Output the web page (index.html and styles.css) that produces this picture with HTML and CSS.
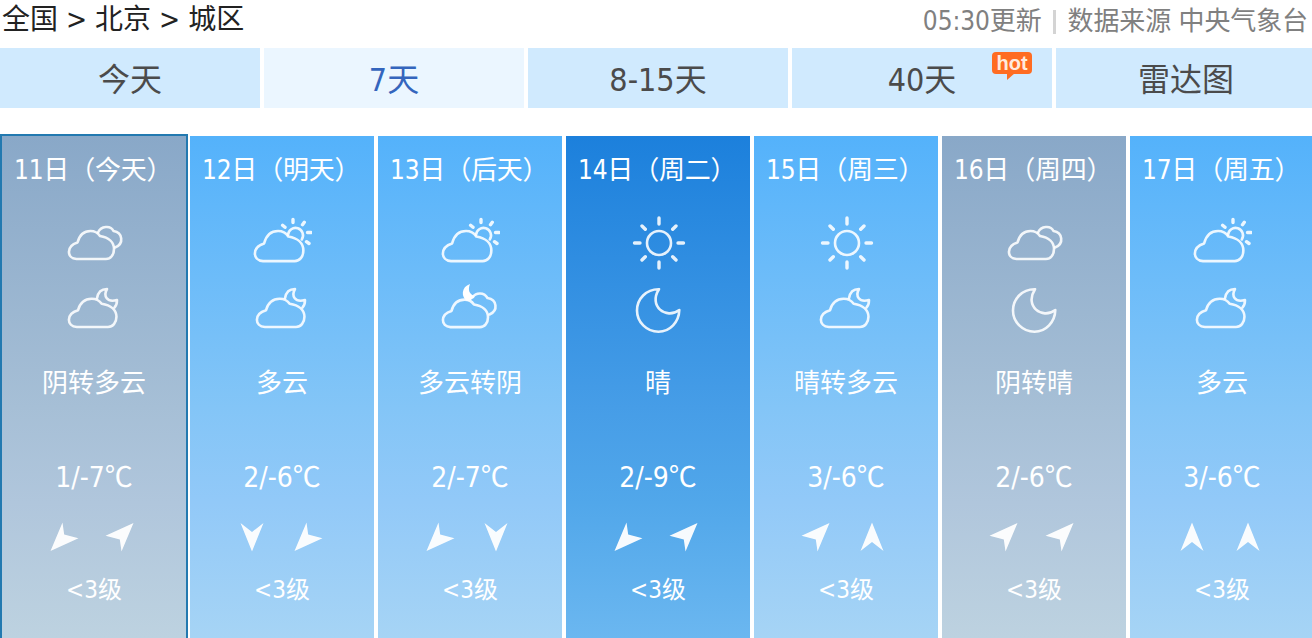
FILE: index.html
```html
<!DOCTYPE html>
<html lang="zh-CN">
<head>
    <meta charset="UTF-8">
    <meta name="viewport" content="width=device-width, initial-scale=1.0">
    <title>北京城区天气预报</title>
    <link rel="stylesheet" href="styles.css">
</head>
<body>
    <svg class="sprite" width="0" height="0">
        <defs>
            <path id="cloud-shape" vector-effect="non-scaling-stroke" d="M12.5 46 C2.5 45.5 2 33 13.5 29.5 C15.5 22 20 18 26.5 18 C30.5 18 34 20 36 23 C45 24.5 50 29.5 50 36 C50 42 46.5 46 42 46 Z"/>
            <symbol id="overcast" viewBox="0 0 60 60">
                <use href="#cloud-shape"/>
                <path d="M34 19.5 C37 13 46.5 12 49.5 18 C58.5 19.5 60.5 30.5 51 34.5"/>
            </symbol>
            <symbol id="cloudy-day" viewBox="0 0 60 60">
                <use href="#cloud-shape" transform="translate(-2.4 -1.3) scale(1.075)"/>
                <path d="M36 22 A7.5 7.5 0 1 1 49.8 26.5"/>
                <path class="ray" d="M41 6.5V9.5M52.3 9.3L50.5 11.7M59 19.5H55.5M57 30.5L54.5 28.7M30.6 12.3L33 14.3"/>
            </symbol>
            <symbol id="cloudy-night" viewBox="0 0 60 60">
                <use href="#cloud-shape" transform="translate(-.3 .5) scale(1.055 1.01)"/>
                <path d="M33 18.3 C34 12 38 9 43 9 C39 16 43 23 53 20 C53 24 52 26 50.5 27.5"/>
            </symbol>
            <symbol id="cloudy-overcast-night" viewBox="0 0 60 60">
                <use href="#cloud-shape" transform="translate(-2 2) scale(1 .98)"/>
                <path d="M33 17 C36 12.5 44 12 47.5 18 C57 19.5 58.5 30.5 49.5 34.5"/>
                <path class="solid" d="M30 4 C21 7 21 17 27 21 C30 21 33.5 19 34.5 15.8 C29.5 14.5 27.5 10 30 4Z"/>
            </symbol>
            <symbol id="sunny" viewBox="0 0 60 60">
                <circle cx="31" cy="30" r="12"/>
                <path class="ray" d="M31 5V11M31 49V55M6.5 30H12M50 30H55.5M14 13L17.3 16.3M48 13L44.7 16.3M14 47L17.3 43.7M48 47L44.7 43.7"/>
            </symbol>
            <symbol id="clear-night" viewBox="0 0 60 60">
                <path d="M31 9.2 C18 9 9 19 9 30.5 C9 42 18.5 51.7 30.5 51.7 C42 51.7 51 42 51.3 30 C38 40 20 26 31 9.2Z"/>
            </symbol>
            <symbol id="wind-n" viewBox="0 0 32 32">
                <path class="solid" d="M16 1.5 L27.5 30 L16 21 L4.5 30Z"/>
            </symbol>
            <symbol id="wind-ne" viewBox="0 0 32 32">
                <path class="solid" d="M29.5 2 L17.5 30.5 L15.8 18.5 L1.5 14.8Z"/>
            </symbol>
        </defs>
    </svg>

    <header class="header">
        <div class="crumbs">全国 &gt; 北京 &gt; 城区</div>
        <div class="source"><span>05:30更新</span><i class="divider"></i><span>数据来源 中央气象台</span></div>
    </header>

    <nav class="tabs">
        <a class="tab">今天</a>
        <a class="tab active">7天</a>
        <a class="tab">8-15天</a>
        <a class="tab">40天<span class="hot">hot</span></a>
        <a class="tab">雷达图</a>
    </nav>

    <ul class="days">
        <li class="day gray today">
            <h2 class="date">11日（今天）</h2>
            <svg class="icon"><use href="#overcast"/></svg>
            <svg class="icon"><use href="#cloudy-night"/></svg>
            <p class="weather">阴转多云</p>
            <p class="temp">1/-7<span class="unit">℃</span></p>
            <div class="wind"><svg class="flip"><use href="#wind-ne"/></svg><svg><use href="#wind-ne"/></svg></div>
            <p class="level">&lt;3级</p>
        </li>
        <li class="day">
            <h2 class="date">12日（明天）</h2>
            <svg class="icon"><use href="#cloudy-day"/></svg>
            <svg class="icon"><use href="#cloudy-night"/></svg>
            <p class="weather">多云</p>
            <p class="temp">2/-6<span class="unit">℃</span></p>
            <div class="wind"><svg class="flip"><use href="#wind-n"/></svg><svg class="flip"><use href="#wind-ne"/></svg></div>
            <p class="level">&lt;3级</p>
        </li>
        <li class="day">
            <h2 class="date">13日（后天）</h2>
            <svg class="icon"><use href="#cloudy-day"/></svg>
            <svg class="icon"><use href="#cloudy-overcast-night"/></svg>
            <p class="weather">多云转阴</p>
            <p class="temp">2/-7<span class="unit">℃</span></p>
            <div class="wind"><svg class="flip"><use href="#wind-ne"/></svg><svg class="flip"><use href="#wind-n"/></svg></div>
            <p class="level">&lt;3级</p>
        </li>
        <li class="day deep">
            <h2 class="date">14日（周二）</h2>
            <svg class="icon"><use href="#sunny"/></svg>
            <svg class="icon"><use href="#clear-night"/></svg>
            <p class="weather">晴</p>
            <p class="temp">2/-9<span class="unit">℃</span></p>
            <div class="wind"><svg class="flip"><use href="#wind-ne"/></svg><svg><use href="#wind-ne"/></svg></div>
            <p class="level">&lt;3级</p>
        </li>
        <li class="day">
            <h2 class="date">15日（周三）</h2>
            <svg class="icon"><use href="#sunny"/></svg>
            <svg class="icon"><use href="#cloudy-night"/></svg>
            <p class="weather">晴转多云</p>
            <p class="temp">3/-6<span class="unit">℃</span></p>
            <div class="wind"><svg><use href="#wind-ne"/></svg><svg><use href="#wind-n"/></svg></div>
            <p class="level">&lt;3级</p>
        </li>
        <li class="day gray">
            <h2 class="date">16日（周四）</h2>
            <svg class="icon"><use href="#overcast"/></svg>
            <svg class="icon"><use href="#clear-night"/></svg>
            <p class="weather">阴转晴</p>
            <p class="temp">2/-6<span class="unit">℃</span></p>
            <div class="wind"><svg><use href="#wind-ne"/></svg><svg><use href="#wind-ne"/></svg></div>
            <p class="level">&lt;3级</p>
        </li>
        <li class="day">
            <h2 class="date">17日（周五）</h2>
            <svg class="icon"><use href="#cloudy-day"/></svg>
            <svg class="icon"><use href="#cloudy-night"/></svg>
            <p class="weather">多云</p>
            <p class="temp">3/-6<span class="unit">℃</span></p>
            <div class="wind"><svg><use href="#wind-n"/></svg><svg><use href="#wind-n"/></svg></div>
            <p class="level">&lt;3级</p>
        </li>
    </ul>
</body>
</html>
```
FILE: styles.css
```css
* {
    margin: 0;
    padding: 0;
    box-sizing: border-box;
}
body {
    height: 638px;
    overflow: hidden;
    background: #fff;
    font-family: "DejaVu Sans Condensed", "Noto Sans CJK SC", sans-serif;
    color: #222;
}
.sprite {
    display: block;
}
.header {
    display: flex;
    justify-content: space-between;
    height: 48px;
    padding: 0 4px 0 2px;
    line-height: 40px;
    white-space: nowrap;
}
.crumbs {
    font-size: 28px;
}
.source {
    display: flex;
    align-items: center;
    height: 42px;
    font-size: 26px;
    color: #808080;
}
.source span {
    letter-spacing: -0.1px;
}
.divider {
    width: 3px;
    height: 24px;
    margin: 2px 12px 0 11px;
    background: #d4d4d4;
}
.tabs {
    display: flex;
    gap: 4px;
    width: 1316px;
}
.tab {
    position: relative;
    width: 260px;
    height: 60px;
    line-height: 64px;
    font-size: 32px;
    text-align: center;
    color: #4b4b4b;
    background: #d0eafe;
}
.tab.active {
    color: #3465bd;
    background: #ebf6ff;
}
.hot {
    position: absolute;
    top: 4px;
    left: 200px;
    width: 40px;
    height: 22px;
    border-radius: 4px;
    background: #ff6c22;
    color: #ffeadd;
    font: bold 20px/22px "Liberation Sans", sans-serif;
}
.hot::after {
    content: "";
    position: absolute;
    top: 21px;
    left: 15px;
    border-top: 7px solid #ff6c22;
    border-right: 8px solid transparent;
}
.days {
    display: flex;
    width: 1316px;
    height: 506px;
    margin-top: 26px;
    list-style: none;
}
.day {
    display: flex;
    flex-direction: column;
    align-items: center;
    width: 188px;
    padding-top: 12px;
    border: 2px solid transparent;
    background: linear-gradient(#54b2fb 0%, #83c5f7 54%, #92c9f8 73%, #a6d4f5 100%) padding-box;
    color: #fff;
    line-height: 44px;
}
.day.gray {
    background: linear-gradient(#89a8c8 0%, #a6bfd6 54%, #b0c6dc 73%, #bdd2e0 100%) padding-box;
}
.day.deep {
    background: linear-gradient(#1c80dc 0%, #469de7 54%, #51a7ea 73%, #6bb7f0 100%) padding-box;
}
.day.today {
    border-color: #2279b0;
}
.date {
    align-self: flex-start;
    padding-left: 12px;
    font-size: 26px;
    font-weight: normal;
    letter-spacing: -0.2px;
    white-space: nowrap;
}
.icon {
    width: 60px;
    height: 60px;
    margin-top: 21px;
    fill: none;
    stroke: #fff;
    stroke-opacity: .88;
    stroke-width: 2.6;
    stroke-linejoin: round;
    stroke-linecap: round;
}
.icon + .icon {
    margin-top: 7px;
}
.ray {
    stroke-width: 3.4;
}
.solid {
    fill: #fff;
    stroke: none;
}
.weather {
    margin-top: 21px;
    font-size: 26px;
}
.temp {
    margin-top: 48px;
    font-size: 28px;
}
.unit {
    font-family: "Noto Sans CJK SC", sans-serif;
}
.wind {
    display: flex;
    gap: 24px;
    margin-top: 21px;
    margin-right: 4px;
}
.wind svg {
    width: 32px;
    height: 32px;
    opacity: .95;
}
.wind .flip {
    transform: rotate(180deg);
}
.level {
    margin-top: 15px;
    font-size: 24px;
}
```
